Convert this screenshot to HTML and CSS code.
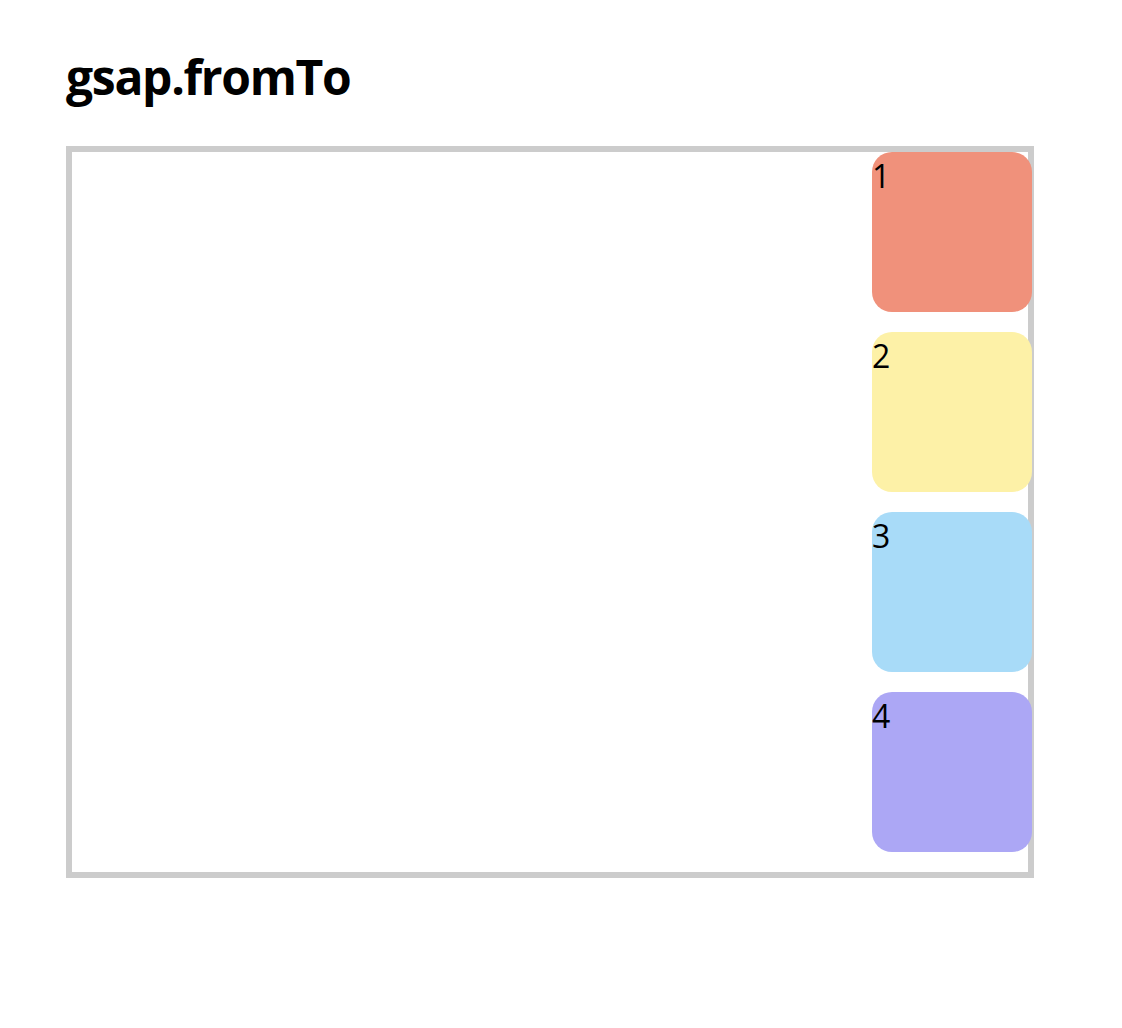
FILE: index.html
```html
<!DOCTYPE html>
<html lang="en">
<head>
<meta charset="utf-8">
<title>gsap.fromTo</title>
<link rel="stylesheet" href="styles.css">
</head>
<body>
<div class="page">
  <h1 class="title">gsap.fromTo</h1>
  <div class="stage">
    <div class="box box-1">1</div>
    <div class="box box-2">2</div>
    <div class="box box-3">3</div>
    <div class="box box-4">4</div>
  </div>
</div>
</body>
</html>
```
FILE: styles.css
```css
html, body {
  margin: 0;
  padding: 0;
  background: #ffffff;
}
body {
  font-family: "Open Sans", "Noto Sans", "Liberation Sans", sans-serif;
  color: #000;
}
.page {
  padding: 45px 66px 0;
}
.title {
  margin: 0 0 37px;
  font-size: 48px;
  line-height: 64px;
  font-weight: 700;
  letter-spacing: -1.3px;
}
.stage {
  width: 956px;
  height: 720px;
  border: 6px solid #cccccc;
  display: flex;
  flex-direction: column;
}
.box {
  width: 160px;
  height: 160px;
  flex: none;
  margin-bottom: 20px;
  border-radius: 20px;
  font-size: 32px;
  line-height: 47px;
  transform: translateX(800px);
}
.box-1 { background: #f0917b; }
.box-2 { background: #fdf1a7; }
.box-3 { background: #a8dbf8; }
.box-4 { background: #aca7f5; }
```
